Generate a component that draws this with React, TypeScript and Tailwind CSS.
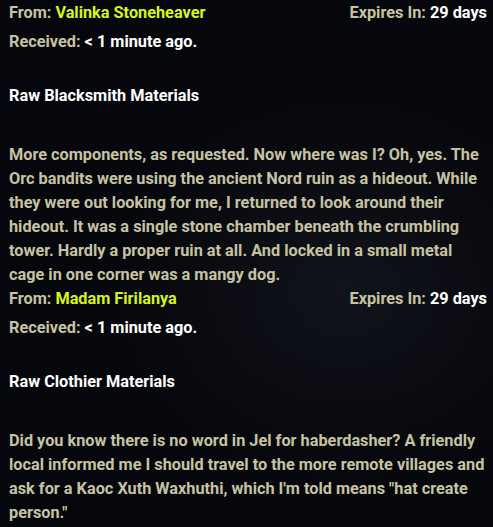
import React from "react";

const font = { fontFamily: 'Roboto, "DejaVu Sans Condensed", sans-serif' };

function Entry({ from, title, body }: { from: string; title: string; body: string }) {
  return (
    <div>
      <div className="flex items-center justify-between h-6 leading-6">
        <div>
          <span className="text-[#c6c3a2]">From: </span>
          <span className="text-[#d6f51c]">{from}</span>
        </div>
        <div>
          <span className="text-[#c6c3a2]">Expires In: </span>
          <span className="text-white">29 days</span>
        </div>
      </div>
      <div className="mt-[5px] h-6 leading-6">
        <span className="text-[#c6c3a2]">Received: </span>
        <span className="text-white">&lt; 1 minute ago.</span>
      </div>
      <div className="mt-[30px] h-6 leading-6 text-white">{title}</div>
      <div className="mt-[35px] -mr-[4px] leading-6 text-[#c6c3a2]">{body}</div>
    </div>
  );
}

export default function App() {
  return (
    <div
      className="w-[493px] h-[527px] overflow-hidden bg-[#06070c] bg-[radial-gradient(ellipse_at_70%_55%,#11131b_0%,#07080d_45%,#05060b_100%)] pl-[9px] pr-[6px] pt-[1px] font-bold text-[16.3px]"
      style={font}
    >
      <Entry
        from="Valinka Stoneheaver"
        title="Raw Blacksmith Materials"
        body="More components, as requested. Now where was I? Oh, yes. The Orc bandits were using the ancient Nord ruin as a hideout. While they were out looking for me, I returned to look around their hideout. It was a single stone chamber beneath the crumbling tower. Hardly a proper ruin at all. And locked in a small metal cage in one corner was a mangy dog."
      />
      <Entry
        from="Madam Firilanya"
        title="Raw Clothier Materials"
        body={'Did you know there is no word in Jel for haberdasher? A friendly local informed me I should travel to the more remote villages and ask for a Kaoc Xuth Waxhuthi, which I\'m told means "hat create person."'}
      />
    </div>
  );
}
